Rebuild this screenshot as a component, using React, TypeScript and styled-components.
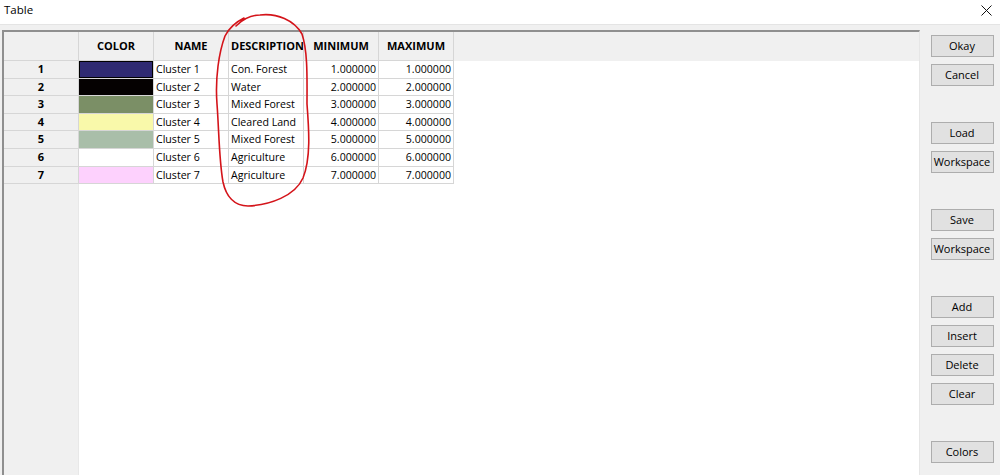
import React from "react";
import styled, { createGlobalStyle } from "styled-components";

interface ClusterRow {
  id: number;
  color: string;
  name: string;
  description: string;
  min: string;
  max: string;
}

const rows: ClusterRow[] = [
  { id: 1, color: "#2f2a72", name: "Cluster 1", description: "Con. Forest", min: "1.000000", max: "1.000000" },
  { id: 2, color: "#050101", name: "Cluster 2", description: "Water", min: "2.000000", max: "2.000000" },
  { id: 3, color: "#7b8f66", name: "Cluster 3", description: "Mixed Forest", min: "3.000000", max: "3.000000" },
  { id: 4, color: "#f9f9aa", name: "Cluster 4", description: "Cleared Land", min: "4.000000", max: "4.000000" },
  { id: 5, color: "#a9bea9", name: "Cluster 5", description: "Mixed Forest", min: "5.000000", max: "5.000000" },
  { id: 6, color: "#ffffff", name: "Cluster 6", description: "Agriculture", min: "6.000000", max: "6.000000" },
  { id: 7, color: "#fdd1fd", name: "Cluster 7", description: "Agriculture", min: "7.000000", max: "7.000000" },
];

const buttonGroups: string[][] = [
  ["Okay", "Cancel"],
  ["Load", "Workspace"],
  ["Save", "Workspace"],
  ["Add", "Insert", "Delete", "Clear"],
  ["Colors"],
];

const GlobalStyle = createGlobalStyle`
  html, body {
    margin: 0;
    padding: 0;
    background: #ffffff;
    font-family: "Open Sans", "Noto Sans", sans-serif;
    overflow: hidden;
  }
`;

const Window = styled.div`
  width: 1000px;
  height: 475px;
  display: flex;
  flex-direction: column;
  position: relative;
  background: #ffffff;
`;

const TitleBar = styled.div`
  height: 24px;
  flex: none;
  display: flex;
  align-items: center;
  justify-content: space-between;
  padding: 0 8px 6px 4px;
  box-sizing: border-box;
  font-size: 11.5px;
  color: #000;
`;

const CloseGlyph = styled.svg`
  width: 11px;
  height: 11px;
  margin-top: 2px;
`;

const Body = styled.div`
  flex: 1;
  display: flex;
  background: #f0f0f0;
  border-top: 1px solid #e4e4e4;
  min-height: 0;
`;

const GridFrame = styled.div`
  margin: 5px 0 0 2px;
  width: 918px;
  display: flex;
  flex-direction: column;
  border-top: 2px solid #8f8f8f;
  border-left: 2px solid #8f8f8f;
  border-right: 1px solid #e6e6e6;
  box-sizing: border-box;
  background: #ffffff;
`;

const GridRow = styled.div<{ $header?: boolean }>`
  display: grid;
  grid-template-columns: 75px repeat(5, 75px) 1fr;
  height: ${({ $header }) => ($header ? "29px" : "17.6px")};
  flex: none;
  background: ${({ $header }) => ($header ? "#f0f0f0" : "#ffffff")};
`;

const HeaderCell = styled.div<{ $empty?: boolean }>`
  border-right: ${({ $empty }) => ($empty ? "none" : "1px solid #d6d6d6")};
  border-bottom: ${({ $empty }) => ($empty ? "none" : "1px solid #d6d6d6")};
  font-size: 11px;
  font-weight: 700;
  color: #000;
  text-align: center;
  line-height: 28px;
  white-space: nowrap;
  overflow: hidden;
  padding: 0 2px;
`;

const RowHeader = styled.div`
  background: #f0f0f0;
  border-right: 1px solid #d6d6d6;
  border-bottom: 1px solid #d6d6d6;
  font-size: 11px;
  font-weight: 700;
  text-align: center;
  line-height: 16.6px;
  color: #000;
`;

const Cell = styled.div<{ $align?: "left" | "right" }>`
  border-right: 1px solid #d6d6d6;
  border-bottom: 1px solid #d6d6d6;
  font-size: 10.6px;
  line-height: 16.6px;
  color: #000;
  text-align: ${({ $align }) => $align ?? "left"};
  padding: 0 2px 0 2px;
  white-space: nowrap;
  overflow: hidden;
`;

const SwatchCell = styled.div<{ $swatch: string; $selected?: boolean }>`
  background: ${({ $swatch }) => $swatch};
  border-right: 1px solid #d6d6d6;
  border-bottom: 1px solid #d6d6d6;
  box-shadow: ${({ $selected }) => ($selected ? "inset 0 0 0 1px #000" : "none")};
`;

const Filler = styled.div`
  flex: 1;
  display: grid;
  grid-template-columns: 75px 1fr;
`;

const FillerGutter = styled.div`
  background: #f0f0f0;
  border-right: 1px solid #e8e8e8;
`;

const ButtonColumn = styled.div`
  flex: 1;
  display: flex;
  flex-direction: column;
  align-items: center;
  padding: 10px 0 0 4px;
  gap: 36px;
`;

const ButtonGroup = styled.div`
  display: flex;
  flex-direction: column;
  gap: 7px;
`;

const DialogButton = styled.button`
  width: 63px;
  height: 22px;
  background: #e1e1e1;
  border: 1px solid #adadad;
  font-family: "Open Sans", "Noto Sans", sans-serif;
  font-size: 11px;
  color: #000;
  padding: 0;
  line-height: 20px;
`;

const Annotation = styled.svg`
  position: absolute;
  left: 0;
  top: 0;
  width: 1000px;
  height: 475px;
  pointer-events: none;
`;

export default function App() {
  return (
    <>
      <GlobalStyle />
      <Window>
        <TitleBar>
          <span>Table</span>
          <CloseGlyph viewBox="0 0 11 11">
            <path d="M0.5 0.5 L10.5 10.5 M10.5 0.5 L0.5 10.5" stroke="#111" strokeWidth="1" fill="none" />
          </CloseGlyph>
        </TitleBar>
        <Body>
          <GridFrame>
            <GridRow $header>
              <HeaderCell />
              <HeaderCell>COLOR</HeaderCell>
              <HeaderCell>NAME</HeaderCell>
              <HeaderCell>DESCRIPTION</HeaderCell>
              <HeaderCell>MINIMUM</HeaderCell>
              <HeaderCell>MAXIMUM</HeaderCell>
              <HeaderCell $empty />
            </GridRow>
            {rows.map((r) => (
              <GridRow key={r.id}>
                <RowHeader>{r.id}</RowHeader>
                <SwatchCell $swatch={r.color} $selected={r.id === 1} />
                <Cell>{r.name}</Cell>
                <Cell>{r.description}</Cell>
                <Cell $align="right">{r.min}</Cell>
                <Cell $align="right">{r.max}</Cell>
                <div />
              </GridRow>
            ))}
            <Filler>
              <FillerGutter />
              <div />
            </Filler>
          </GridFrame>
          <ButtonColumn>
            {buttonGroups.map((group, i) => (
              <ButtonGroup key={i}>
                {group.map((label, j) => (
                  <DialogButton key={j}>{label}</DialogButton>
                ))}
              </ButtonGroup>
            ))}
          </ButtonColumn>
        </Body>
        <Annotation viewBox="0 0 1000 475">
          <path
            d="M236 26 C242 20 250 15 260 15 C277 13 294 20 302 34 C308 52 307 80 307 104 C309 130 311 158 303 178 C295 196 270 205 248 206 C234 206 226 196 223 182 C219 160 219 130 217 104 C215 78 219 52 225 36 C229 28 236 22 244 18"
            stroke="#d4141a"
            strokeWidth="1.6"
            fill="none"
            strokeLinecap="round"
          />
        </Annotation>
      </Window>
    </>
  );
}
